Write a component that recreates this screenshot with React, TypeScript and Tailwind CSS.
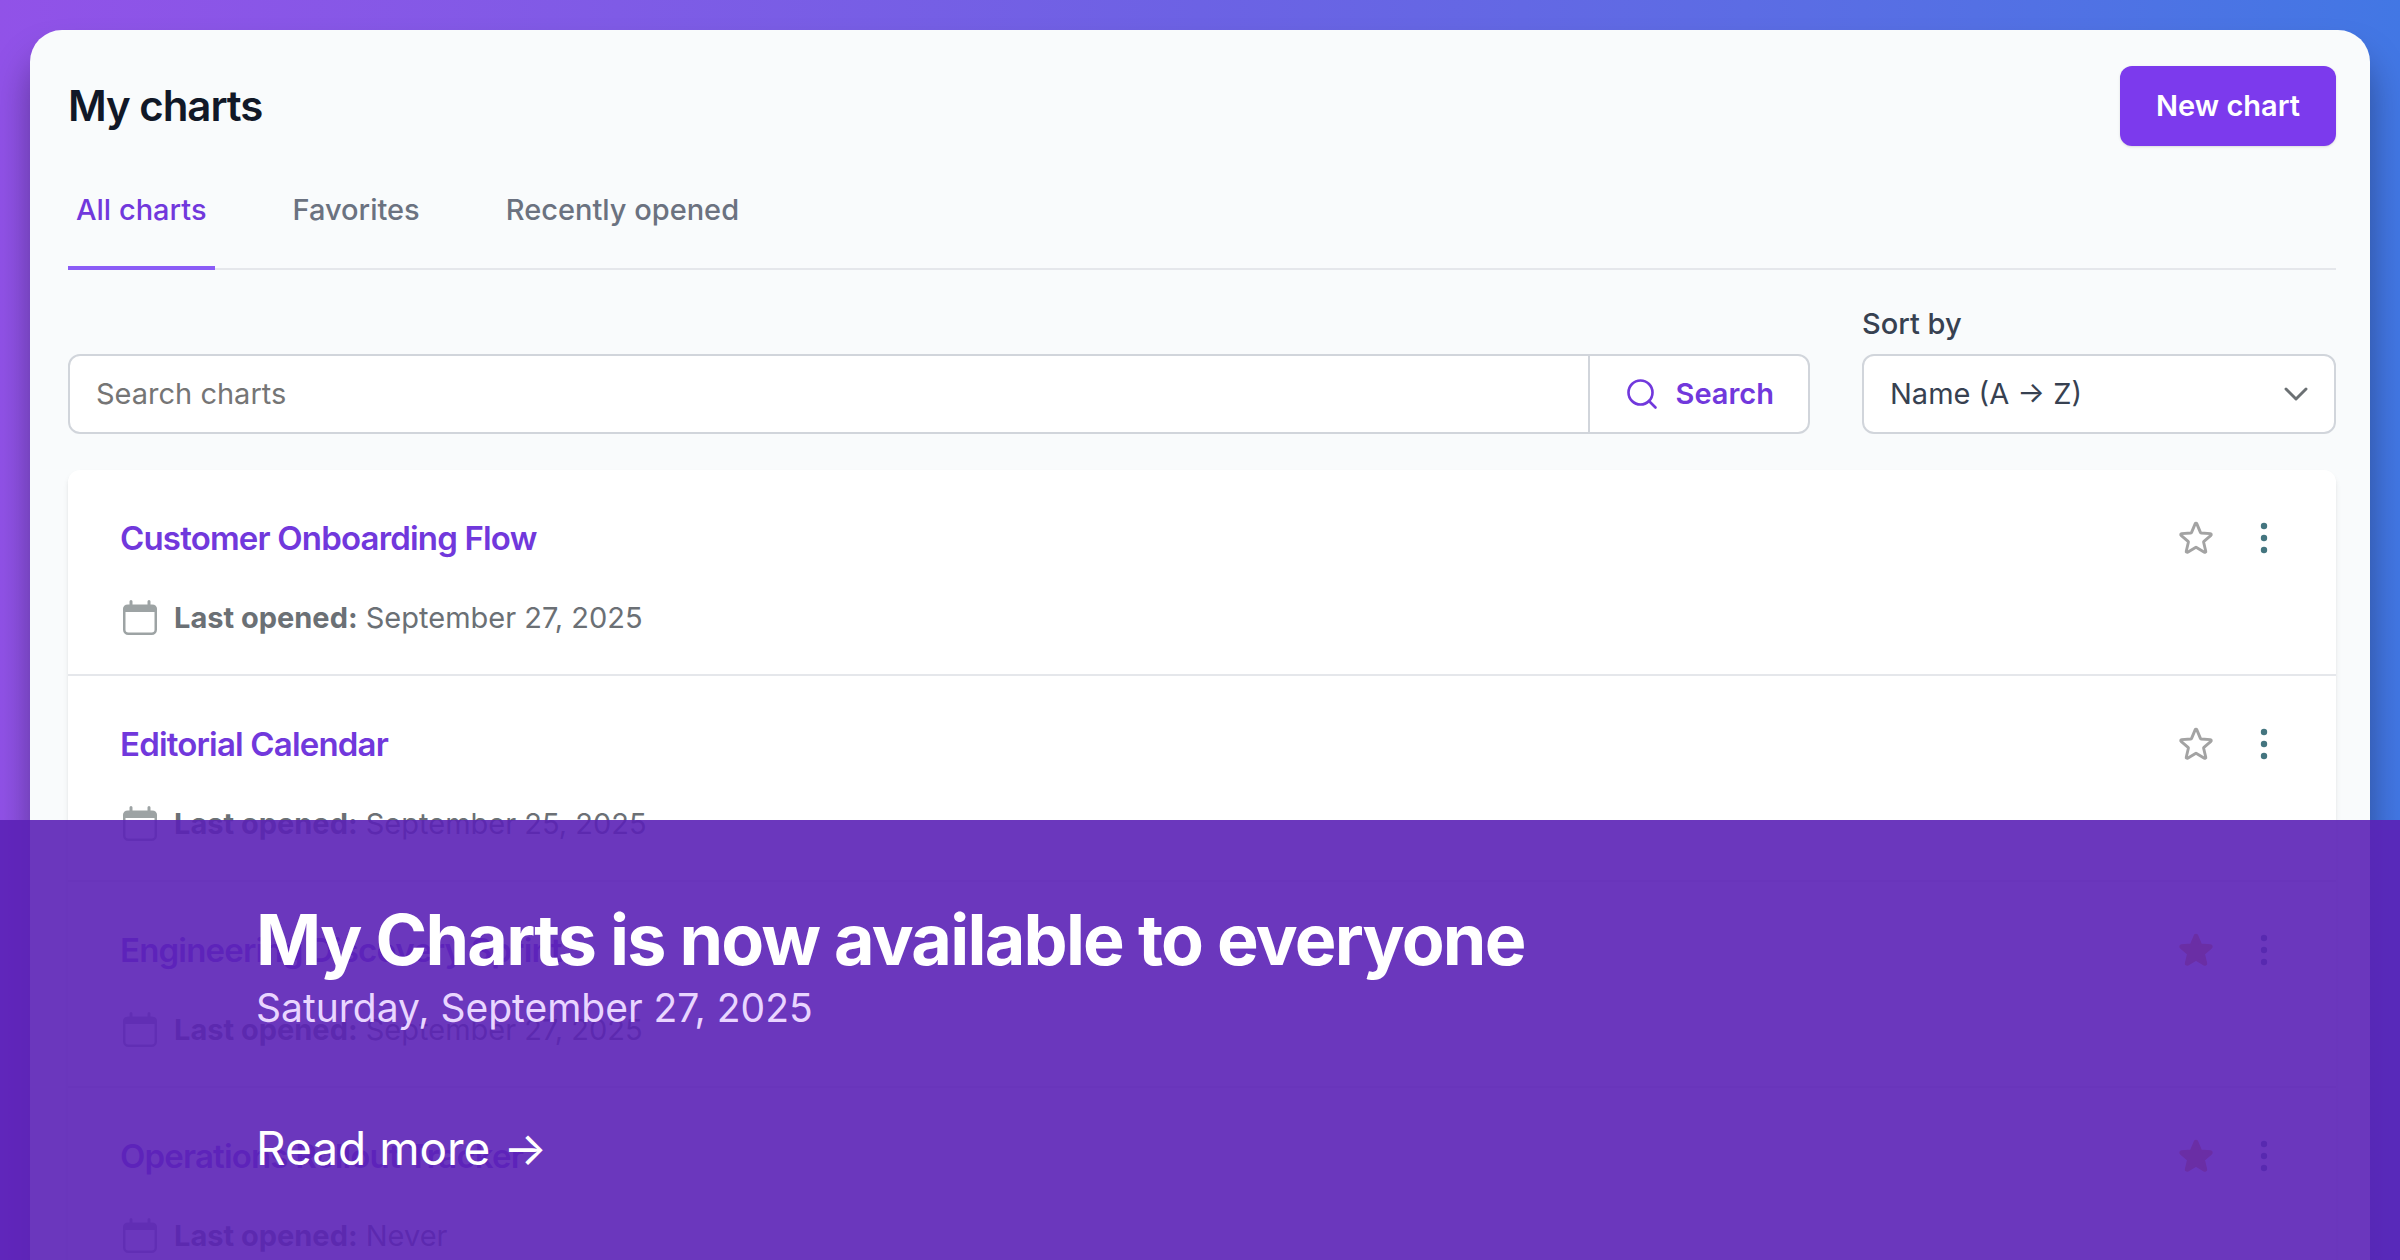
import React from 'react';
import { Search, ChevronDown } from 'lucide-react';

interface Chart {
  name: string;
  opened: string;
  favorite: boolean;
}

const charts: Chart[] = [
  { name: 'Customer Onboarding Flow', opened: 'September 27, 2025', favorite: false },
  { name: 'Editorial Calendar', opened: 'September 25, 2025', favorite: false },
  { name: 'Engineering Discovery Sprint', opened: 'September 27, 2025', favorite: true },
  { name: 'Operations Rollout Tracker', opened: 'Never', favorite: true },
];

const tabs = ['All charts', 'Favorites', 'Recently opened'];

function CalendarIcon() {
  return (
    <svg className="h-10 w-10 text-[#9da3a4]" viewBox="0 0 40 40" fill="none" stroke="currentColor" aria-hidden="true">
      <rect x="4.25" y="8.25" width="31.5" height="27.5" rx="4" strokeWidth="2.5" />
      <path d="M3 14v-2.500q0-5 5-5h24q5 0 5 5V14z" fill="currentColor" stroke="none" />
      <path d="M11 3.500v5M29 3.500v5" strokeWidth="3" strokeLinecap="round" />
    </svg>
  );
}

function StarIcon({ filled }: { filled: boolean }) {
  return (
    <svg
      className={filled ? 'h-10 w-10 text-[#f59e0b]' : 'h-10 w-10 text-[#a3a3a3]'}
      viewBox="0 0 24 24"
      fill={filled ? 'currentColor' : 'none'}
      stroke="currentColor"
      strokeWidth="1.75"
      strokeLinecap="round"
      strokeLinejoin="round"
      aria-hidden="true"
    >
      <path d="M11.48 3.499a.562.562 0 0 1 1.04 0l2.125 5.111a.563.563 0 0 0 .475.345l5.518.442c.499.04.701.663.321.988l-4.204 3.602a.563.563 0 0 0-.182.557l1.285 5.385a.562.562 0 0 1-.84.61l-4.725-2.885a.562.562 0 0 0-.586 0L6.982 20.54a.562.562 0 0 1-.84-.61l1.285-5.386a.562.562 0 0 0-.182-.557l-4.204-3.602a.562.562 0 0 1 .321-.988l5.518-.442a.563.563 0 0 0 .475-.345L11.48 3.5Z" />
    </svg>
  );
}

function DotsIcon() {
  return (
    <svg className="h-10 w-10 text-[#44757f]" viewBox="0 0 40 40" fill="currentColor" aria-hidden="true">
      <circle cx="20" cy="8" r="3.2" />
      <circle cx="20" cy="20" r="3.2" />
      <circle cx="20" cy="32" r="3.2" />
    </svg>
  );
}

function ChartRow({ chart }: { chart: Chart }) {
  return (
    <li className="px-13 pt-11 pb-8">
      <div className="flex items-center justify-between">
        <h2 className="text-[33px] leading-12 font-semibold tracking-tight text-[#7138dc]">
          <a href="#">{chart.name}</a>
        </h2>
        <div className="flex gap-7">
          <button type="button" aria-label="Toggle favorite">
            <StarIcon filled={chart.favorite} />
          </button>
          <button type="button" aria-label="Chart options">
            <DotsIcon />
          </button>
        </div>
      </div>
      <p className="mt-8 flex items-center gap-3.5 text-[29px] leading-12 text-[#6b7075]">
        <CalendarIcon />
        <span>
          <strong className="font-bold">Last opened:</strong> {chart.opened}
        </span>
      </p>
    </li>
  );
}

export default function App() {
  return (
    <div className="relative h-screen overflow-hidden bg-linear-to-r from-[#9152e8] via-[#6c62e4] to-[#4277e4] px-[30px] pt-[30px] font-['Inter',sans-serif]">
      <main className="min-h-full rounded-t-[32px] bg-[#f9fbfc] pt-9 pr-[34px] pl-[38px] shadow-[0_28px_36px_rgba(0,0,0,0.35)]">
        <header className="flex items-center justify-between">
          <h1 className="text-[42px] leading-14 font-semibold tracking-tight text-[#111827]">My charts</h1>
          <button type="button" className="h-20 rounded-xl bg-[#7c3aed] px-9 text-[29px] font-semibold text-white shadow-sm">
            New chart
          </button>
        </header>

        <nav className="mt-9 flex gap-[70px] border-b-2 border-[#e5e7eb]">
          {tabs.map((tab, i) => (
            <button
              key={tab}
              type="button"
              className={
                i === 0
                  ? '-mb-0.5 border-b-4 border-[#8b5cf6] px-2 pt-2 pb-9 text-[29px] leading-10 font-medium text-[#7138dc]'
                  : '-mb-0.5 border-b-4 border-transparent px-2 pt-2 pb-9 text-[29px] leading-10 font-medium text-[#6b7280]'
              }
            >
              {tab}
            </button>
          ))}
        </nav>

        <form className="mt-8 flex items-end gap-13" onSubmit={(e) => e.preventDefault()}>
          <div className="flex h-20 flex-1 rounded-xl border-2 border-[#d1d5db] bg-white">
            <input
              type="text"
              aria-label="Search charts"
              placeholder="Search charts"
              className="min-w-0 flex-1 rounded-l-xl px-[26px] text-[29px] outline-none placeholder:text-[#757575]"
            />
            <button type="submit" className="flex items-center gap-4 border-l-2 border-[#d1d5db] px-[34px] text-[29px] font-semibold text-[#7138dc]">
              <Search className="h-9 w-9" strokeWidth={1.75} />
              Search
            </button>
          </div>
          <div className="w-[474px]">
            <label htmlFor="sort" className="block pb-2 text-[29px] leading-11 font-medium text-[#374151]">
              Sort by
            </label>
            <div className="relative">
              <select
                id="sort"
                className="h-20 w-full appearance-none rounded-xl border-2 border-[#d1d5db] bg-white px-[26px] text-[29px] text-[#374151]"
              >
                <option>Name (A → Z)</option>
                <option>Name (Z → A)</option>
              </select>
              <ChevronDown className="pointer-events-none absolute top-5 right-5 h-10 w-10 text-[#6b7073]" strokeWidth={1.75} />
            </div>
          </div>
        </form>

        <ul className="mt-9 divide-y-2 divide-[#e5e7eb] rounded-xl bg-white shadow-md">
          {charts.map((chart) => (
            <ChartRow key={chart.name} chart={chart} />
          ))}
        </ul>
      </main>

      {/* Announcement banner */}
      <section className="absolute inset-x-0 bottom-0 h-[440px] bg-[#5b21b6]/90 px-64 pt-20 text-white">
        <h2 className="text-[70px] leading-20 font-bold tracking-tight">My Charts is now available to everyone</h2>
        <p className="text-[39px] leading-14 text-[#e9d5ff]">Saturday, September 27, 2025</p>
        <a href="#" className="mt-20 inline-block text-[46px] leading-16">
          Read more →
        </a>
      </section>
    </div>
  );
}
